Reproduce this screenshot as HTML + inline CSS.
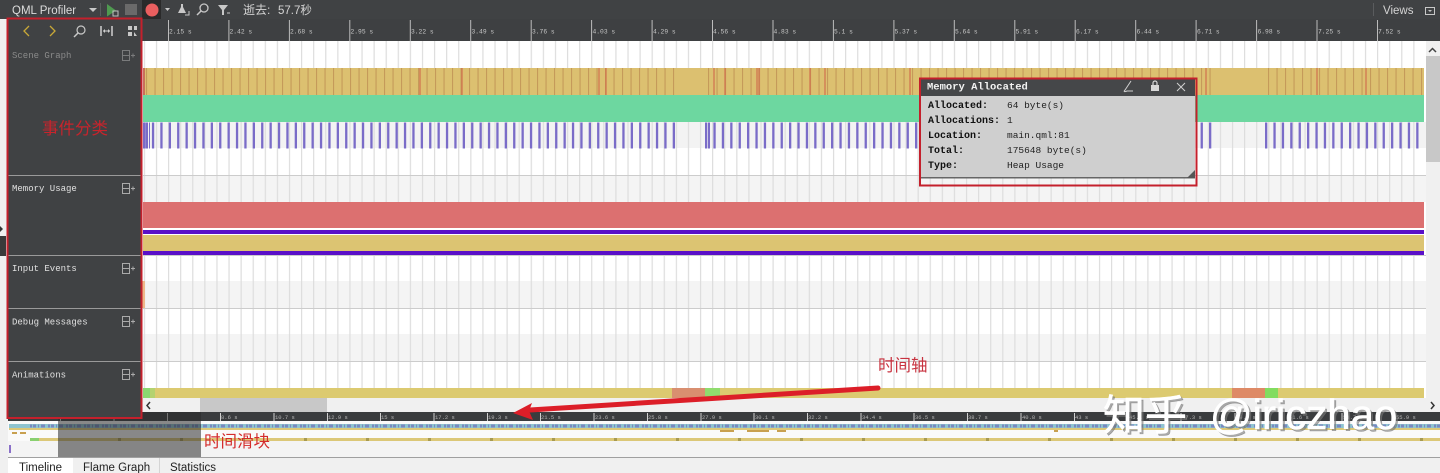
<!DOCTYPE html>
<html><head><meta charset="utf-8"><style>
html,body{margin:0;padding:0;width:1440px;height:473px;overflow:hidden;background:#f0f0f0}
svg{display:block;filter:blur(.3px)}
.m{font-family:"Liberation Mono","Noto Sans CJK SC",monospace}
.s{font-family:"Liberation Sans","Noto Sans CJK SC",sans-serif}
</style></head><body>
<svg width="1440" height="473" viewBox="0 0 1440 473" xmlns="http://www.w3.org/2000/svg">
<defs>
<pattern id="g" patternUnits="userSpaceOnUse" x="168" y="0" width="12.09" height="10"><rect x="0" y="0" width="1.2" height="10" fill="#dddddd"/></pattern>
</defs>
<rect width="1440" height="473" fill="#f0f0f0"/>
<!-- toolbar -->
<rect width="1440" height="19" fill="#404244"/>
<text x="12" y="14" class="s" font-size="11.5" fill="#dcdcdc">QML Profiler</text>
<path d="M89 8h8l-4 4z" fill="#c8c8c8"/>
<rect x="100" y="3" width="1" height="13" fill="#5a5c5e"/>
<path d="M107 4l9 6.500-9 6z" fill="#4f9a50"/><path d="M113 11h5v5h-5z" fill="none" stroke="#c0c0c0"/>
<rect x="125" y="4" width="12" height="11" fill="#6a6a6a"/>
<rect x="142" y="0" width="19" height="19" fill="#2a2a2a"/>
<circle cx="152" cy="10" r="6.500" fill="#ea5f5f"/>
<path d="M165 8h5l-2.500 3z" fill="#c8c8c8"/>
<path d="M178 13l3-6h2l3 6zM181 4h2v3h-2z" fill="#c8c8c8"/><path d="M185 15h4v-4" fill="none" stroke="#c8c8c8"/>
<circle cx="204" cy="8" r="4" fill="none" stroke="#c8c8c8" stroke-width="1.300"/><path d="M201 11l-4 4" stroke="#c8c8c8" stroke-width="1.500"/>
<path d="M218 5h10l-4 5v5h-2v-5z" fill="#c8c8c8"/><path d="M227 13h3" stroke="#c8c8c8"/>
<text x="243" y="14" class="s" font-size="12" fill="#d4d4d4">逝去:</text>
<text x="278" y="14" class="s" font-size="11.5" fill="#d4d4d4">57.7秒</text>
<rect x="1373" y="3" width="1" height="13" fill="#5a5c5e"/>
<text x="1383" y="14" class="s" font-size="11.5" fill="#d4d4d4">Views</text>
<rect x="1425.500" y="7.500" width="9" height="7" fill="none" stroke="#c8c8c8"/><path d="M1428 10h4l-2 2z" fill="#c8c8c8"/>

<!-- left gutter -->
<rect x="0" y="19" width="8" height="393" fill="#f0f0f0"/>
<rect x="0" y="236" width="6" height="20" fill="#3a3a3a"/>
<path d="M0 226l3 3-3 3z" fill="#333"/>

<!-- timeline rows -->
<rect x="142" y="41" width="1284" height="357" fill="#ffffff"/>
<rect x="143" y="122" width="1283" height="26" fill="#f3f3f3"/>
<rect x="143" y="176" width="1283" height="26" fill="#f4f4f4"/>
<rect x="143" y="281" width="1283" height="27" fill="#f4f4f4"/>
<rect x="143" y="334" width="1283" height="27" fill="#f4f4f4"/>
<rect x="143" y="41" width="1282" height="357" fill="url(#g)"/>
<path d="M143 175.500H1426M143 255.500H1426M143 308.500H1426M143 361.500H1426" stroke="#cccccc"/>

<!-- scene graph bars -->
<rect x="143" y="68" width="1281" height="27" fill="#dcc070"/>
<rect x="143" y="95" width="1281" height="27" fill="#6dd7a0"/>
<path d="M146 81.500H675M708 81.500H1215M1268 81.500H1424" stroke="#b8864e" stroke-opacity=".65" stroke-width="27" stroke-dasharray="1.100 7.400" fill="none"/>
<path d="M420 68v27M462 68v27M599 68v27M606 68v27M714 68v27M725 68v27M757 68v27M759 68v27M810 68v27M825 68v27M910 68v27M1206 68v27M1317 68v27M1366 68v27" stroke="#d0704e" stroke-width="1.200"/>
<path d="M143.500 135.500H675M705 135.500H1215M1265 135.500H1420" stroke="#7a6cc8" stroke-width="26" stroke-dasharray="2.300 6.100" fill="none"/>
<path d="M143 135.500H150M705 135.500H711" stroke="#7a6cc8" stroke-width="26" stroke-dasharray="2 1" fill="none"/>
<rect x="143" y="68" width="2" height="27" fill="#c9705a"/>

<!-- memory -->
<rect x="143" y="202" width="1281" height="26" fill="#dc7070"/>
<rect x="143" y="228" width="1281" height="7" fill="#ffffff"/>
<rect x="143" y="230" width="1281" height="4" fill="#5a10c8"/>
<rect x="143" y="235" width="1281" height="16" fill="#dcc472"/>
<rect x="143" y="251" width="1281" height="4" fill="#5a10c8"/>
<rect x="142" y="281" width="3" height="27" fill="#eeb98a"/>

<!-- animations -->
<rect x="143" y="388" width="1281" height="10" fill="#dcca70"/>
<rect x="143" y="388" width="7" height="10" fill="#8ad870"/>
<rect x="150" y="388" width="5" height="10" fill="#b4d270"/>
<rect x="672" y="388" width="33" height="10" fill="#d98f70"/>
<rect x="705" y="388" width="15" height="10" fill="#8fdc6e"/>
<rect x="1232" y="388" width="33" height="10" fill="#de8a66"/>
<rect x="1265" y="388" width="13" height="10" fill="#82dc60"/>

<!-- ruler -->
<rect x="142" y="19" width="1284" height="22" fill="#3e4042"/>
<rect x="1426" y="19" width="14" height="22" fill="#3e4042"/>
<g stroke="#bcbcbc" stroke-width="1"><path d="M168.500 20v21M228.900 20v21M289.400 20v21M349.800 20v21M410.300 20v21M470.700 20v21M531.200 20v21M591.600 20v21M652.100 20v21M712.500 20v21M773 20v21M833.400 20v21M893.900 20v21M954.300 20v21M1014.800 20v21M1075.200 20v21M1135.700 20v21M1196.100 20v21M1256.600 20v21M1317 20v21M1377.500 20v21"/></g>
<g class="m" font-size="6.300" fill="#c6c6c6">
<text x="169" y="33.500">2.15 s</text><text x="229.500" y="33.500">2.42 s</text><text x="290" y="33.500">2.68 s</text><text x="350.500" y="33.500">2.95 s</text><text x="411" y="33.500">3.22 s</text><text x="471.500" y="33.500">3.49 s</text><text x="532" y="33.500">3.76 s</text><text x="592.500" y="33.500">4.03 s</text><text x="653" y="33.500">4.29 s</text><text x="713" y="33.500">4.56 s</text><text x="773.500" y="33.500">4.83 s</text><text x="834" y="33.500">5.1 s</text><text x="894.500" y="33.500">5.37 s</text><text x="955" y="33.500">5.64 s</text><text x="1015.500" y="33.500">5.91 s</text><text x="1076" y="33.500">6.17 s</text><text x="1136.500" y="33.500">6.44 s</text><text x="1197" y="33.500">6.71 s</text><text x="1257.500" y="33.500">6.98 s</text><text x="1318" y="33.500">7.25 s</text><text x="1378" y="33.500">7.52 s</text>
</g>

<!-- vertical scrollbar -->
<rect x="1426" y="41" width="14" height="357" fill="#f0f0f0"/>
<rect x="1426" y="56" width="14" height="106" fill="#c8c8c8"/>
<path d="M1429 52l3.500-3.500 3.500 3.500" fill="none" stroke="#444" stroke-width="1.500"/>

<!-- horizontal scrollbar -->
<rect x="142" y="398" width="1298" height="14" fill="#f0f0f0"/>
<rect x="200" y="398" width="127" height="14" fill="#c8c8c8"/>
<path d="M150 402l-3 3.500 3 3.500" fill="none" stroke="#333" stroke-width="1.500"/>
<path d="M1431 402l3 3.500-3 3.500" fill="none" stroke="#333" stroke-width="1.500"/>

<!-- overview -->
<rect x="8" y="412" width="1432" height="10" fill="#3a3c3e"/>
<rect x="8" y="421" width="1432" height="36" fill="#fafafa"/>
<rect x="8" y="441" width="1432" height="16" fill="#f4f4f4"/>
<g stroke="#d0d0d0"><path d="M60.500 413v8M114 413v8M167.500 413v8M220.500 413v8M274 413v8M327.500 413v8M380.500 413v8M434 413v8M487.500 413v8M540.500 413v8M594 413v8M647.500 413v8M701 413v8M754 413v8M807.500 413v8M861 413v8M914 413v8M967.500 413v8M1021 413v8M1074.500 413v8M1128 413v8M1181 413v8M1235 413v8M1288 413v8M1342 413v8M1395 413v8"/></g>
<g class="m" font-size="5.500" fill="#b4b4b4">
<text x="221" y="419">8.6 s</text><text x="275" y="419">10.7 s</text><text x="328" y="419">12.9 s</text><text x="381" y="419">15 s</text><text x="435" y="419">17.2 s</text><text x="488" y="419">19.3 s</text><text x="541" y="419">21.5 s</text><text x="595" y="419">23.6 s</text><text x="648" y="419">25.8 s</text><text x="702" y="419">27.9 s</text><text x="755" y="419">30.1 s</text><text x="808" y="419">32.2 s</text><text x="862" y="419">34.4 s</text><text x="915" y="419">36.5 s</text><text x="968" y="419">38.7 s</text><text x="1022" y="419">40.8 s</text><text x="1075" y="419">43 s</text><text x="1129" y="419">45.1 s</text><text x="1182" y="419">47.3 s</text><text x="1236" y="419">49.4 s</text><text x="1289" y="419">51.6 s</text><text x="1343" y="419">53.7 s</text><text x="1396" y="419">55.9 s</text>
</g>
<rect x="9" y="424" width="1431" height="4" fill="#8fc4d0"/>
<path d="M30 426H1440" stroke="#6a62b4" stroke-opacity=".6" stroke-width="3" stroke-dasharray="2 1 3 2 1 2 4 3" fill="none"/>
<rect x="9" y="428" width="1431" height="2" fill="#dcc878"/>
<path d="M12 433h5M20 433h6M720 431h14M747 431h22M777 431h9M1054 431h4" stroke="#c8a050" stroke-width="2" fill="none"/>
<rect x="30" y="438" width="1410" height="3" fill="#dcc878"/>
<rect x="30" y="438" width="9" height="3" fill="#8ad070"/>
<path d="M118 439.500H1440" stroke="#a89a50" stroke-width="3" stroke-dasharray="3 59" fill="none"/>
<path d="M10 445v8" stroke="#8a70c8" stroke-width="2"/>
<rect x="58" y="412" width="143" height="45" fill="#2a2a2a" fill-opacity="0.55"/>
<rect x="8" y="457" width="1432" height="1" fill="#a0a0a0"/>

<!-- tabs -->
<rect x="8" y="458" width="65" height="15" fill="#ffffff"/>
<rect x="159" y="458" width="1" height="15" fill="#d4d4d4"/>
<g class="s" font-size="11.500" fill="#222"><text x="19" y="471">Timeline</text><text x="83" y="471">Flame Graph</text><text x="170" y="471">Statistics</text></g>

<!-- left panel -->
<rect x="8" y="19" width="133" height="399" fill="#404244"/>
<path d="M8 175.500H141M8 255.500H141M8 308.500H141M8 361.500H141" stroke="#9a9a9a"/>
<path d="M29 26l-5 5 5 5" fill="none" stroke="#c8a838" stroke-width="1.300"/>
<path d="M50 26l5 5-5 5" fill="none" stroke="#c8a838" stroke-width="1.300"/>
<circle cx="81" cy="30" r="4" fill="none" stroke="#c8c8c8" stroke-width="1.200"/><path d="M78 33l-4 4" stroke="#c8c8c8" stroke-width="1.500"/>
<path d="M101 26v10M112 26v10" stroke="#d0d0d0" stroke-width="1.500"/><path d="M103 31h7" stroke="#d0d0d0"/><path d="M103 31l2-2v4zM110 31l-2-2v4z" fill="#d0d0d0"/>
<path d="M128 26h4v4h-4zM134 26h3v4h-3zM128 32h4v4h-4zM134 32l3 4h-3z" fill="#c8c8c8"/>
<g class="m" font-size="9">
<text x="12" y="58" fill="#8a8a8a">Scene Graph</text>
<text x="12" y="191" fill="#e0e0e0">Memory Usage</text>
<text x="12" y="271" fill="#e0e0e0">Input Events</text>
<text x="12" y="324.500" fill="#e0e0e0">Debug Messages</text>
<text x="12" y="377.500" fill="#e0e0e0">Animations</text>
</g>
<g fill="none" stroke="#aaa">
<g opacity=".55"><rect x="122.500" y="50.500" width="7" height="10"/><path d="M122.500 55.500h7M131 55.500h4M133 53.500v4"/></g>
<rect x="122.500" y="183.500" width="7" height="10"/><path d="M122.500 188.500h7M131 188.500h4M133 186.500v4"/>
<rect x="122.500" y="263.500" width="7" height="10"/><path d="M122.500 268.500h7M131 268.500h4M133 266.500v4"/>
<rect x="122.500" y="316.500" width="7" height="10"/><path d="M122.500 321.500h7M131 321.500h4M133 319.500v4"/>
<rect x="122.500" y="369.500" width="7" height="10"/><path d="M122.500 374.500h7M131 374.500h4M133 372.500v4"/>
</g>
<rect x="7.500" y="18.500" width="134" height="399.500" fill="none" stroke="#c4202c" stroke-width="2"/>
<text x="42" y="134" class="s" font-size="16.500" fill="#c8242c">事件分类</text>

<!-- popup -->
<rect x="921" y="79" width="274" height="17" fill="#454749"/>
<rect x="921" y="96" width="274" height="82" fill="#cfcfcf"/>
<rect x="921" y="177" width="274" height="1.500" fill="#666"/>
<path d="M1195 170v8h-8z" fill="#555"/>
<text x="927" y="89.500" class="m" font-size="10.500" font-weight="bold" fill="#f2f2f2">Memory Allocated</text>
<path d="M1131 81l-6 9c-2 2 0 2 2 1l6 0" fill="none" stroke="#cfcfcf"/>
<rect x="1151" y="85" width="8" height="6" fill="#d8d8d8"/><path d="M1153 85v-2a2 2 0 0 1 4 0v2" fill="none" stroke="#d8d8d8" stroke-width="1.200"/>
<path d="M1177 83l8 8M1185 83l-8 8" stroke="#d0d0d0"/>
<g class="m" font-size="10" font-weight="bold" fill="#111">
<text x="928" y="108">Allocated:</text><text x="928" y="123">Allocations:</text><text x="928" y="138">Location:</text><text x="928" y="153">Total:</text><text x="928" y="168">Type:</text>
</g>
<g class="m" font-size="9.500" fill="#222">
<text x="1007" y="108">64 byte(s)</text><text x="1007" y="123">1</text><text x="1007" y="138">main.qml:81</text><text x="1007" y="153">175648 byte(s)</text><text x="1007" y="168">Heap Usage</text>
</g>
<rect x="920" y="78.500" width="276.500" height="107" fill="none" stroke="#c4202c" stroke-width="2"/>

<!-- annotations -->
<path d="M878 388L530 410" stroke="#dc1e28" stroke-width="5" stroke-linecap="round" fill="none"/>
<path d="M513 413L532 403L529 411L533 420z" fill="#dc1e28"/>
<text x="878" y="371" class="s" font-size="16.500" fill="#c8323f">时间轴</text>
<text x="204" y="447" class="s" font-size="16.500" fill="#d42c2c">时间滑块</text>

<!-- watermark -->
<g class="s" font-size="42">
<text x="1105" y="432" fill="#777" fill-opacity=".6" stroke="#777" stroke-opacity=".6" stroke-width=".6">知乎</text>
<text x="1212" y="431" fill="#777" fill-opacity=".6" stroke="#777" stroke-opacity=".6" stroke-width=".6">@iriczhao</text>
<text x="1103" y="430" fill="#ffffff" stroke="#ffffff" stroke-width=".6">知乎</text>
<text x="1210" y="429" fill="#ffffff" stroke="#ffffff" stroke-width=".6">@iriczhao</text>
</g>
</svg>
</body></html>
